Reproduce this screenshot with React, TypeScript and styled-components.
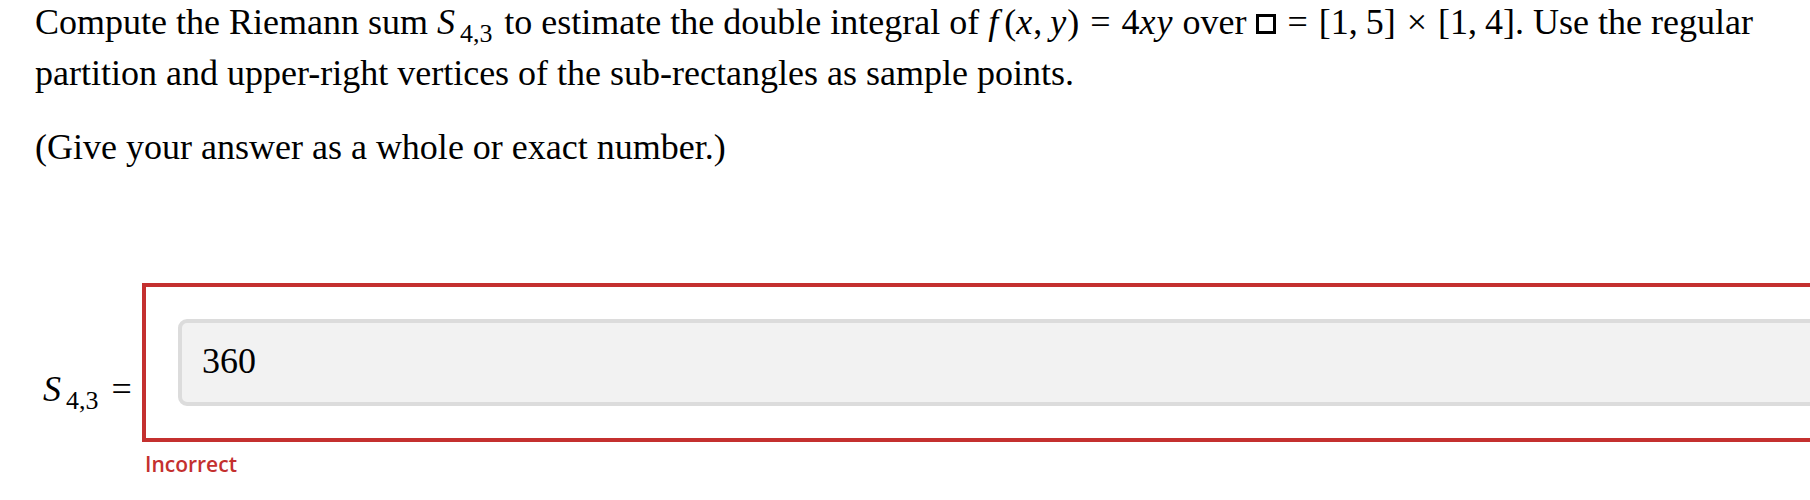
import styled, { createGlobalStyle } from "styled-components";

const GlobalStyle = createGlobalStyle`
  html, body {
    margin: 0;
    padding: 0;
    background: #fff;
    overflow: hidden;
  }
`;

const Page = styled.div`
  width: 1810px;
  padding: 0 0 0 35px;
  box-sizing: border-box;
  font-family: "Liberation Serif", "Times New Roman", serif;
  font-size: 36px;
  color: #000;
`;

const Paragraph = styled.p<{ $top?: number; $gap?: number }>`
  margin: ${(p) => p.$top ?? 0}px 0 ${(p) => p.$gap ?? 0}px;
  width: 1768px;
  line-height: 51px;
`;

const Var = styled.i<{ $after?: number }>`
  font-style: italic;
  letter-spacing: 1px;
  margin-right: ${(p) => p.$after ?? 0}px;
`;

const Sub = styled.sub`
  font-size: 0.72em;
  line-height: 0;
  vertical-align: baseline;
  position: relative;
  top: 0.3em;
  margin: 0 3px 0 4px;
`;

const Op = styled.span<{ $space?: number }>`
  margin: 0 ${(p) => p.$space ?? 11}px;
`;

const Comma = styled.span`
  margin-right: 8px;
`;

const RegionBox = styled.span`
  display: inline-block;
  width: 20px;
  height: 20px;
  border: 3px solid #000;
  box-sizing: border-box;
  margin: 0 0 0 10px;
  vertical-align: 0;
`;

const AnswerRow = styled.div`
  display: flex;
  align-items: flex-start;
  margin-top: 110px;
`;

const Label = styled.div`
  flex: 0 0 107px;
  box-sizing: border-box;
  padding: 80px 0 0 8px;
  line-height: 52px;
  white-space: nowrap;
`;

const AnswerColumn = styled.div`
  display: flex;
  flex-direction: column;
`;

const ErrorFrame = styled.div`
  width: 1760px;
  padding: 32px;
  border: 4px solid #c4302f;
  box-sizing: border-box;
`;

const AnswerInput = styled.div`
  height: 87px;
  display: flex;
  align-items: center;
  padding: 0 20px 3px;
  background: #f2f2f2;
  border: 4px solid #dcdcdc;
  border-radius: 9px;
  box-sizing: border-box;
`;

const Feedback = styled.div`
  margin: 8px 0 0 3px;
  font-family: "Open Sans", "Liberation Sans", sans-serif;
  font-weight: 600;
  font-size: 21px;
  line-height: 28px;
  color: #c4302f;
`;

export default function App() {
  return (
    <>
      <GlobalStyle />
      <Page>
        <Paragraph $top={-3} $gap={23}>
          Compute the Riemann sum <Var>S</Var>
          <Sub>4,3</Sub> to estimate the double integral of{" "}
          <Var $after={5}>f</Var>(<Var>x</Var>
          <Comma>,</Comma>
          <Var>y</Var>)<Op>=</Op>4<Var>xy</Var> over
          <RegionBox />
          <Op>=</Op>[1<Comma>,</Comma>5]<Op $space={11}>×</Op>[1
          <Comma>,</Comma>4]. Use the regular partition and upper-right
          vertices of the sub-rectangles as sample points.
        </Paragraph>
        <Paragraph>(Give your answer as a whole or exact number.)</Paragraph>
        <AnswerRow>
          <Label>
            <Var>S</Var>
            <Sub>4,3</Sub>
            <Op $space={10}>=</Op>
          </Label>
          <AnswerColumn>
            <ErrorFrame>
              <AnswerInput>360</AnswerInput>
            </ErrorFrame>
            <Feedback>Incorrect</Feedback>
          </AnswerColumn>
        </AnswerRow>
      </Page>
    </>
  );
}
